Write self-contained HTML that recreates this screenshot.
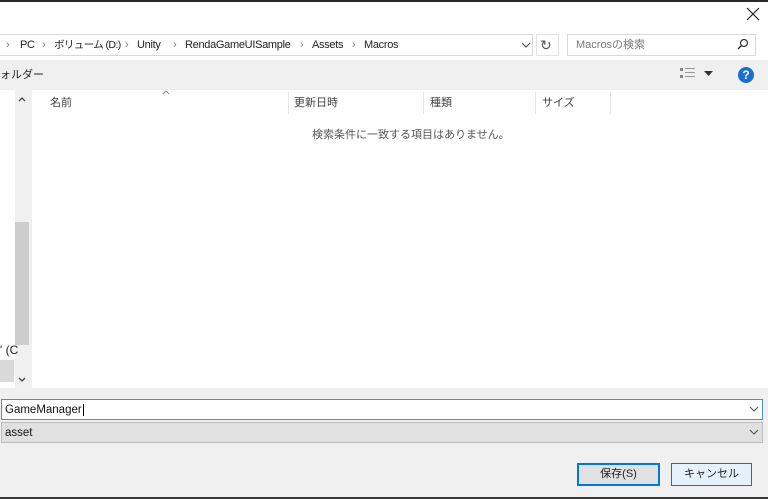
<!DOCTYPE html>
<html><head><meta charset="utf-8"><style>
body{margin:0;width:768px;height:499px;position:relative;background:#f0f0f0;overflow:hidden;font-family:"Liberation Sans","Noto Sans CJK JP",sans-serif;font-size:12px;line-height:14px;color:#1e1e1e}
.a{position:absolute}
.b{position:absolute;top:38px;font-size:11px;line-height:14px;letter-spacing:-0.3px;color:#222;white-space:nowrap}
.s{position:absolute;top:38px;line-height:14px;color:#777;font-size:11px}
</style></head><body>
<div class="a" style="left:0;top:0;width:768px;height:2px;background:#2b2b2b"></div>
<div class="a" style="left:0;top:2px;width:768px;height:58px;background:#fff"></div>
<svg class="a" style="left:746px;top:7px" width="14" height="14"><path d="M1 1L13 13M13 1L1 13" stroke="#222" stroke-width="1.2"/></svg>
<div class="a" style="left:0;top:34px;width:532px;height:20px;border:1px solid #d9d9d9;border-left:none;background:#fff"></div>
<div class="s" style="left:6px">›</div>
<div class="b" style="left:20px">PC</div>
<div class="s" style="left:42px">›</div>
<div class="b" style="left:54px;font-size:10.5px;letter-spacing:-0.6px">ボリューム (D:)</div>
<div class="s" style="left:125px">›</div>
<div class="b" style="left:137px">Unity</div>
<div class="s" style="left:173px">›</div>
<div class="b" style="left:185px">RendaGameUISample</div>
<div class="s" style="left:300px">›</div>
<div class="b" style="left:312px">Assets</div>
<div class="s" style="left:352px">›</div>
<div class="b" style="left:364px">Macros</div>
<svg class="a" style="left:521px;top:41px" width="10" height="8"><path d="M1 2L5 6L9 2" fill="none" stroke="#555" stroke-width="1.2"/></svg>
<div class="a" style="left:536px;top:34px;width:21px;height:20px;border:1px solid #e3e3e3;background:#fff"></div>
<div class="a" style="left:540px;top:37px;font-size:14px;line-height:16px;color:#555">↻</div>
<div class="a" style="left:567px;top:34px;width:187px;height:20px;border:1px solid #d9d9d9;background:#fff"></div>
<div class="a" style="left:576px;top:38px;color:#777;font-size:11px">Macrosの検索</div>
<svg class="a" style="left:737px;top:38px" width="12" height="12"><circle cx="7" cy="5" r="3.5" fill="none" stroke="#333" stroke-width="1.2"/><path d="M4.5 7.5L1 11" stroke="#333" stroke-width="1.4"/></svg>
<div class="a" style="left:0;top:68px;color:#222;font-size:11px">ォルダー</div>
<div class="a" style="left:680px;top:68px;width:14px;height:10px;border-left:3px dotted #888"></div>
<div class="a" style="left:685px;top:68px;width:10px;height:10px;background:repeating-linear-gradient(#999 0 1px,transparent 1px 4px)"></div>
<svg class="a" style="left:704px;top:71px" width="9" height="6"><path d="M0 0H9L4.5 5Z" fill="#333"/></svg>
<div class="a" style="left:738px;top:67px;width:16px;height:16px;border-radius:50%;background:#1a6fd0;color:#fff;font-weight:bold;font-size:12px;text-align:center;line-height:16px">?</div>
<div class="a" style="left:0;top:90px;width:15px;height:298px;background:#fff"></div>
<div class="a" style="left:15px;top:90px;width:14px;height:298px;background:#f0f0f0"></div>
<div class="a" style="left:15px;top:222px;width:14px;height:123px;background:#cdcdcd"></div>
<svg class="a" style="left:18px;top:96px" width="8" height="6"><path d="M1 5L4 2L7 5" fill="none" stroke="#444" stroke-width="1.3"/></svg>
<svg class="a" style="left:18px;top:377px" width="8" height="6"><path d="M1 1L4 4L7 1" fill="none" stroke="#444" stroke-width="1.3"/></svg>
<div class="a" style="left:0;top:343px;color:#222">' (C</div>
<div class="a" style="left:0;top:360px;width:14px;height:22px;background:#d9d9d9"></div>
<div class="a" style="left:32px;top:90px;width:736px;height:298px;background:#fff"></div>
<div class="a" style="left:50px;top:96px;color:#444;font-size:11px">名前</div>
<svg class="a" style="left:162px;top:90px" width="8" height="5"><path d="M1 4L4 1L7 4" fill="none" stroke="#888" stroke-width="1"/></svg>
<div class="a" style="left:288px;top:92px;width:1px;height:22px;background:#e5e5e5"></div>
<div class="a" style="left:294px;top:96px;color:#444;font-size:11px">更新日時</div>
<div class="a" style="left:423px;top:92px;width:1px;height:22px;background:#e5e5e5"></div>
<div class="a" style="left:430px;top:96px;color:#444;font-size:11px">種類</div>
<div class="a" style="left:535px;top:92px;width:1px;height:22px;background:#e5e5e5"></div>
<div class="a" style="left:542px;top:96px;color:#444;font-size:11px">サイズ</div>
<div class="a" style="left:610px;top:92px;width:1px;height:22px;background:#e5e5e5"></div>
<div class="a" style="left:312px;top:128px;color:#555;font-size:11px">検索条件に一致する項目はありません。</div>
<div class="a" style="left:1px;top:399px;width:760px;height:19px;border:1px solid #4a90d9;background:#fff"></div>
<div class="a" style="left:5px;top:403px;color:#111;font-size:11.5px">GameManager<span style="border-left:1px solid #000;margin-left:1px"></span></div>
<svg class="a" style="left:749px;top:406px" width="10" height="7"><path d="M1 1L5 5L9 1" fill="none" stroke="#555" stroke-width="1.1"/></svg>
<div class="a" style="left:1px;top:422px;width:760px;height:19px;border:1px solid #bdbdbd;background:#e1e1e1"></div>
<div class="a" style="left:5px;top:426px;color:#111;font-size:11.5px">asset</div>
<svg class="a" style="left:749px;top:429px" width="10" height="7"><path d="M1 1L5 5L9 1" fill="none" stroke="#555" stroke-width="1.1"/></svg>
<div class="a" style="left:577px;top:463px;width:79px;height:19px;border:2px solid #0078d7;background:#e1e1e1;text-align:center;line-height:19px;font-size:11px">保存(S)</div>
<div class="a" style="left:671px;top:463px;width:79px;height:21px;border:1px solid #0078d7;background:#e5f1fb;text-align:center;line-height:21px;font-size:11px">キャンセル</div>
<div class="a" style="left:0;top:497px;width:768px;height:2px;background:#3a3a3a"></div>
</body></html>
